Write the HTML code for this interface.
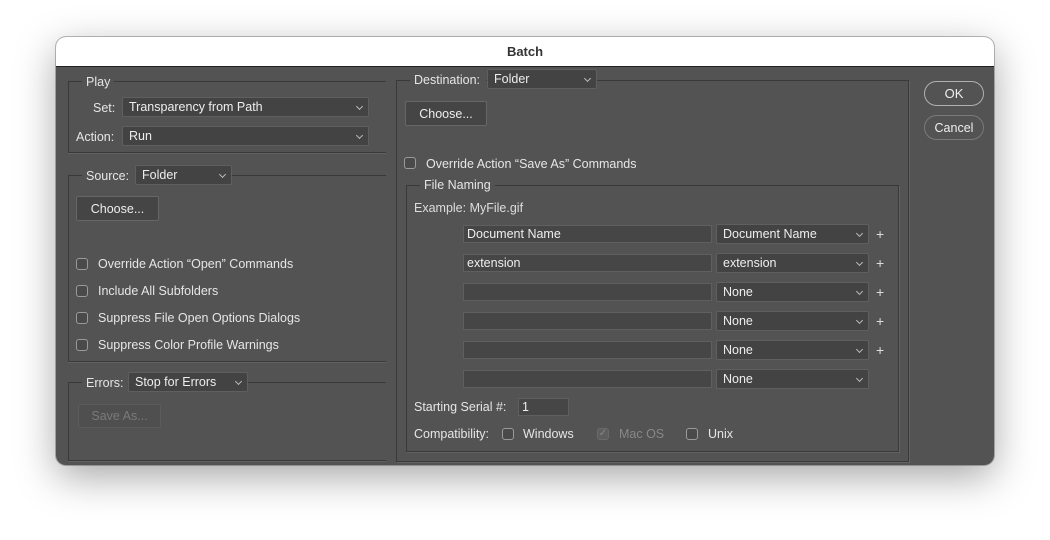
<!DOCTYPE html>
<html><head><style>
*{box-sizing:border-box;margin:0;padding:0}
body{width:1050px;height:540px;background:#fff;position:relative;overflow:hidden;font-family:"Liberation Sans",sans-serif;font-size:12.5px;color:#e6e6e6}
.win{position:absolute;left:56px;top:37px;width:938px;height:428px;border-radius:10px;background:#535353;box-shadow:0 12px 40px rgba(0,0,0,.35),0 0 0 1px rgba(0,0,0,.25);overflow:hidden}
.title{position:absolute;left:0;top:0;width:100%;height:30px;background:#fff;border-bottom:1px solid #222;text-align:center;line-height:29px;font-weight:bold;font-size:13px;color:#333}
.a{position:absolute;white-space:nowrap;margin-top:1px}
.box{position:absolute;border:1px solid #393939;box-shadow:1px 1px 0 #626262}
.lbl{position:absolute;background:#535353;padding:0 4px;line-height:14px;margin-top:1px}
.dd{position:absolute;background:#434343;border:1px solid #5f5f5f;border-radius:2px;padding-left:6px;line-height:19px;color:#eee}
.dd:after{content:"";position:absolute;right:6px;top:6px;width:4px;height:4px;border-right:1px solid #bbb;border-bottom:1px solid #bbb;transform:rotate(45deg)}
.tf{position:absolute;background:#464646;border:1px solid #5f5f5f;padding-left:3px;line-height:17px;color:#eee;height:18px}
.btn{position:absolute;background:#454545;border:1px solid #666;border-radius:2px;text-align:center;color:#eee}
.cb{position:absolute;width:12px;height:12px;border:1px solid #9a9a9a;border-radius:3px;background:#4a4a4a}
.pl{position:absolute;font-size:14px;color:#ddd;margin-top:1px}
.pill{position:absolute;border-radius:13px;text-align:center;color:#eee;font-size:13px}
</style></head><body>
<div class="win">
<div class="title">Batch</div>
</div>
<div class="box" style="left:68px;top:81px;width:318px;height:72px;border-right:none;box-shadow:0 1px 0 #626262"></div>
<div class="lbl" style="left:82px;top:74px">Play</div>
<div class="a" style="left:93px;top:100px">Set:</div>
<div class="dd" style="left:122px;top:97px;width:247px;height:20px">Transparency from Path</div>
<div class="a" style="left:76px;top:129px">Action:</div>
<div class="dd" style="left:122px;top:126px;width:247px;height:20px">Run</div>

<div class="box" style="left:68px;top:175px;width:318px;height:187px;border-right:none;box-shadow:0 1px 0 #626262"></div>
<div class="lbl" style="left:82px;top:168px;padding-right:6px">Source:</div>
<div class="dd" style="left:135px;top:165px;width:97px;height:20px">Folder</div>
<div class="btn" style="left:76px;top:196px;width:83px;height:25px;line-height:24px">Choose...</div>
<div class="cb" style="left:76px;top:258px"></div><div class="a" style="left:98px;top:256px">Override Action “Open” Commands</div>
<div class="cb" style="left:76px;top:285px"></div><div class="a" style="left:98px;top:283px">Include All Subfolders</div>
<div class="cb" style="left:76px;top:312px"></div><div class="a" style="left:98px;top:310px">Suppress File Open Options Dialogs</div>
<div class="cb" style="left:76px;top:339px"></div><div class="a" style="left:98px;top:337px">Suppress Color Profile Warnings</div>

<div class="box" style="left:68px;top:382px;width:318px;height:79px;border-right:none;box-shadow:0 1px 0 #626262"></div>
<div class="lbl" style="left:82px;top:375px;padding-right:6px">Errors:</div>
<div class="dd" style="left:128px;top:372px;width:120px;height:20px">Stop for Errors</div>
<div class="btn" style="left:78px;top:404px;width:83px;height:24px;line-height:23px;background:#4f4f4f;border-color:#5c5c5c;color:#7a7a7a">Save As...</div>

<div class="box" style="left:396px;top:80px;width:513px;height:382px"></div>
<div class="lbl" style="left:410px;top:72px;padding-right:6px">Destination:</div>
<div class="dd" style="left:487px;top:69px;width:110px;height:20px">Folder</div>
<div class="btn" style="left:405px;top:101px;width:82px;height:25px;line-height:24px">Choose...</div>
<div class="cb" style="left:404px;top:157px"></div><div class="a" style="left:426px;top:156px">Override Action “Save As” Commands</div>
<div class="box" style="left:406px;top:185px;width:493px;height:267px"></div>
<div class="lbl" style="left:420px;top:177px">File Naming</div>
<div class="a" style="left:414px;top:200px;color:#ddd">Example: MyFile.gif</div>

<div class="tf" style="left:463px;top:225px;width:249px">Document Name</div>
<div class="dd" style="left:716px;top:224px;width:153px;height:20px">Document Name</div><div class="pl" style="left:876px;top:225px">+</div>
<div class="tf" style="left:463px;top:254px;width:249px">extension</div>
<div class="dd" style="left:716px;top:253px;width:153px;height:20px">extension</div><div class="pl" style="left:876px;top:254px">+</div>
<div class="tf" style="left:463px;top:283px;width:249px"></div>
<div class="dd" style="left:716px;top:282px;width:153px;height:20px">None</div><div class="pl" style="left:876px;top:283px">+</div>
<div class="tf" style="left:463px;top:312px;width:249px"></div>
<div class="dd" style="left:716px;top:311px;width:153px;height:20px">None</div><div class="pl" style="left:876px;top:312px">+</div>
<div class="tf" style="left:463px;top:341px;width:249px"></div>
<div class="dd" style="left:716px;top:340px;width:153px;height:20px">None</div><div class="pl" style="left:876px;top:341px">+</div>
<div class="tf" style="left:463px;top:370px;width:249px"></div>
<div class="dd" style="left:716px;top:369px;width:153px;height:20px">None</div>

<div class="a" style="left:414px;top:399px">Starting Serial #:</div>
<div class="tf" style="left:518px;top:398px;width:51px">1</div>
<div class="a" style="left:414px;top:426px">Compatibility:</div>
<div class="cb" style="left:502px;top:428px"></div><div class="a" style="left:523px;top:426px">Windows</div>
<div class="cb" style="left:597px;top:428px;border-color:#6a6a6a;background:#5e5e5e;font-size:10px;line-height:10px;color:#888;text-align:center">✓</div><div class="a" style="left:619px;top:426px;color:#888">Mac OS</div>
<div class="cb" style="left:686px;top:428px"></div><div class="a" style="left:708px;top:426px">Unix</div>

<div class="pill" style="left:924px;top:81px;width:60px;height:25px;border:1px solid #b0b0b0;line-height:24px">OK</div>
<div class="pill" style="left:924px;top:115px;width:60px;height:25px;border:1px solid #7a7a7a;line-height:24px;font-size:12.5px">Cancel</div>
</body></html>
